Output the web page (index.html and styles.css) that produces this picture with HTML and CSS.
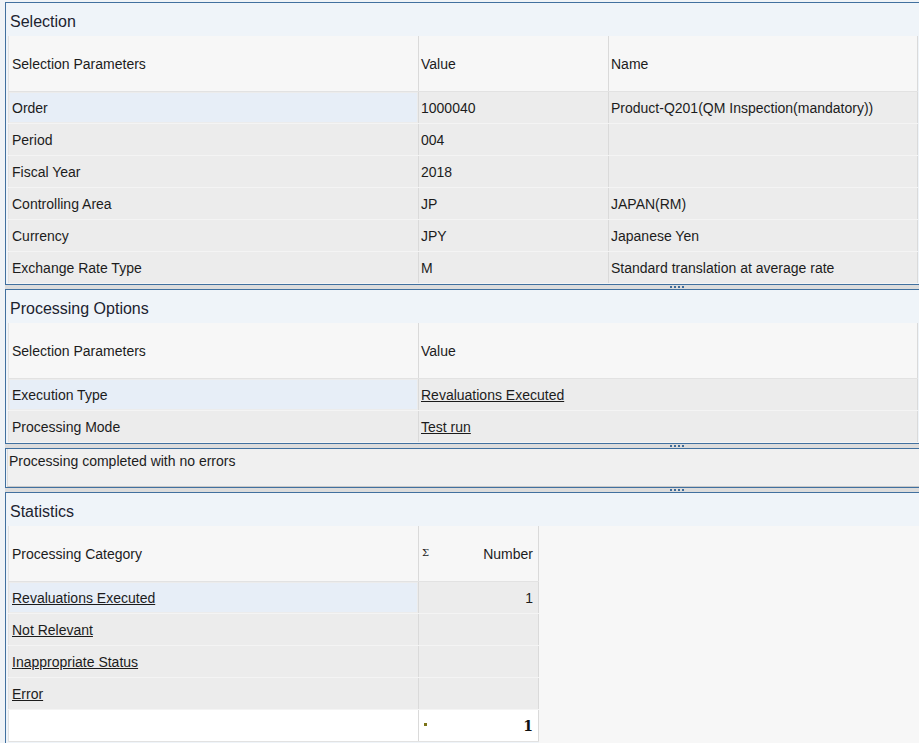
FILE: index.html
```html
<!DOCTYPE html>
<html lang="en">
<head>
    <meta charset="UTF-8">
    <title>Revaluation at Actual Prices</title>
    <link rel="stylesheet" href="styles.css">
</head>
<body>
    <div class="layout">
        <!-- Selection block -->
        <section class="panel">
            <div class="panel-title">Selection</div>
            <div class="panel-body">
                <table class="grid grid-wide">
                    <colgroup>
                        <col class="c-param">
                        <col class="c-value">
                        <col>
                    </colgroup>
                    <thead>
                        <tr>
                            <th>Selection Parameters</th>
                            <th>Value</th>
                            <th>Name</th>
                        </tr>
                    </thead>
                    <tbody>
                        <tr>
                            <td class="key">Order</td>
                            <td>1000040</td>
                            <td>Product-Q201(QM Inspection(mandatory))</td>
                        </tr>
                        <tr>
                            <td>Period</td>
                            <td>004</td>
                            <td></td>
                        </tr>
                        <tr>
                            <td>Fiscal Year</td>
                            <td>2018</td>
                            <td></td>
                        </tr>
                        <tr>
                            <td>Controlling Area</td>
                            <td>JP</td>
                            <td>JAPAN(RM)</td>
                        </tr>
                        <tr>
                            <td>Currency</td>
                            <td>JPY</td>
                            <td>Japanese Yen</td>
                        </tr>
                        <tr>
                            <td>Exchange Rate Type</td>
                            <td>M</td>
                            <td>Standard translation at average rate</td>
                        </tr>
                    </tbody>
                </table>
            </div>
        </section>

        <div class="splitter"><span class="grip"><i></i><i></i><i></i><i></i></span></div>

        <!-- Processing options -->
        <section class="panel">
            <div class="panel-title">Processing Options</div>
            <div class="panel-body">
                <table class="grid grid-wide">
                    <colgroup>
                        <col class="c-param">
                        <col>
                    </colgroup>
                    <thead>
                        <tr>
                            <th>Selection Parameters</th>
                            <th>Value</th>
                        </tr>
                    </thead>
                    <tbody>
                        <tr>
                            <td class="key">Execution Type</td>
                            <td><a href="#">Revaluations Executed</a></td>
                        </tr>
                        <tr>
                            <td>Processing Mode</td>
                            <td><a href="#">Test run</a></td>
                        </tr>
                    </tbody>
                </table>
            </div>
        </section>

        <div class="splitter"><span class="grip"><i></i><i></i><i></i><i></i></span></div>

        <!-- Message log -->
        <section class="panel">
            <div class="message">Processing completed with no errors</div>
        </section>

        <div class="splitter"><span class="grip"><i></i><i></i><i></i><i></i></span></div>

        <!-- Statistics -->
        <section class="panel panel-last">
            <div class="panel-title">Statistics</div>
            <div class="panel-body stats-body">
                <table class="grid grid-stats">
                    <colgroup>
                        <col class="c-param">
                        <col class="c-number">
                    </colgroup>
                    <thead>
                        <tr>
                            <th>Processing Category</th>
                            <th class="num"><span class="sigma">&Sigma;</span>Number</th>
                        </tr>
                    </thead>
                    <tbody>
                        <tr>
                            <td class="key"><a href="#">Revaluations Executed</a></td>
                            <td class="num">1</td>
                        </tr>
                        <tr>
                            <td><a href="#">Not Relevant</a></td>
                            <td class="num"></td>
                        </tr>
                        <tr>
                            <td><a href="#">Inappropriate Status</a></td>
                            <td class="num"></td>
                        </tr>
                        <tr>
                            <td><a href="#">Error</a></td>
                            <td class="num"></td>
                        </tr>
                        <tr class="total">
                            <td></td>
                            <td class="num"><span class="total-mark"></span><b>1</b></td>
                        </tr>
                    </tbody>
                </table>
                <div class="stats-fill"></div>
            </div>
        </section>
    </div>
</body>
</html>
```

FILE: styles.css
```css
html, body {
    margin: 0;
    padding: 0;
    height: 100%;
    overflow: hidden;
}
body {
    background-color: #eff3f7;
    font-family: "Liberation Sans", Arial, sans-serif;
    font-size: 14px;
    color: #1c1c1c;
}
.layout {
    display: flex;
    flex-direction: column;
    padding-top: 2px;
    padding-left: 5px;
}

/* panels */
.panel {
    border-top: 1px solid #41709f;
    border-bottom: 1px solid #41709f;
    border-left: 1px solid #41709f;
    background-color: #eff4f9;
}
.panel-last {
    border-bottom: none;
}
.panel-title {
    height: 33px;
    box-sizing: border-box;
    padding: 5px 0 0 4px;
    display: flex;
    align-items: center;
    font-size: 16px;
    color: #1c2330;
}
.panel-body {
    padding-left: 2px;
}

/* splitter between panels */
.splitter {
    height: 4px;
    background-color: #dcdcdc;
    display: flex;
    align-items: center;
    padding-left: 665px;
}
.grip {
    display: flex;
    gap: 2px;
}
.grip i {
    width: 2px;
    height: 2px;
    background-color: #3f6b98;
}

/* grids */
.grid {
    border-collapse: collapse;
    table-layout: fixed;
    border-left: 1px solid #e2e2e2;
}
.grid-wide {
    width: 910px;
    border-right: 1px solid #dadada;
}
.grid-stats {
    width: 530px;
}
.c-param {
    width: 410px;
}
.c-value {
    width: 190px;
}
.c-number {
    width: 120px;
}
.grid th {
    height: 55px;
    padding: 0 2px;
    text-align: left;
    font-weight: normal;
    background-color: #f7f7f7;
    border-right: 1px solid #dadada;
    border-bottom: 1px solid #e2e2e2;
    white-space: nowrap;
}
.grid td {
    height: 31px;
    padding: 0 2px;
    background-color: #ececec;
    border-right: 1px solid #dadada;
    border-bottom: 1px solid #f4f4f4;
    white-space: nowrap;
}
.grid th:first-child,
.grid td:first-child {
    padding-left: 3px;
}
.grid td.key {
    background-color: #e7eef7;
    box-shadow: inset 0 0 0 1px #ececec;
}
.grid .num {
    text-align: right;
    padding-right: 5px;
}
.grid th.num {
    position: relative;
}
.sigma {
    position: absolute;
    left: 3px;
    top: 21px;
    font-family: "DejaVu Serif", serif;
    font-size: 10px;
}
.grid a {
    color: #1c1c1c;
}
.grid tr.total td {
    background-color: #ffffff;
    border-bottom: 1px solid #e2e2e2;
}
.grid tr.total td.num {
    position: relative;
}
.total-mark {
    position: absolute;
    left: 5px;
    top: 13px;
    width: 3px;
    height: 3px;
    background-color: #7b7318;
}
.grid tr.total b {
    font-family: "DejaVu Serif", serif;
    font-size: 14px;
    color: #111;
}

/* statistics area */
.stats-body {
    display: flex;
    align-items: flex-start;
    height: 300px;
}
.stats-fill {
    flex: 1;
    align-self: stretch;
    background-color: #f7f7f7;
}

/* message log */
.message {
    height: 38px;
    box-sizing: border-box;
    margin-left: 1px;
    padding: 4px 0 0 1px;
    background-color: #f0f0f0;
    border-bottom: 1px solid #c9c9c9;
    border-left: 1px solid #dcdcdc;
}
```
